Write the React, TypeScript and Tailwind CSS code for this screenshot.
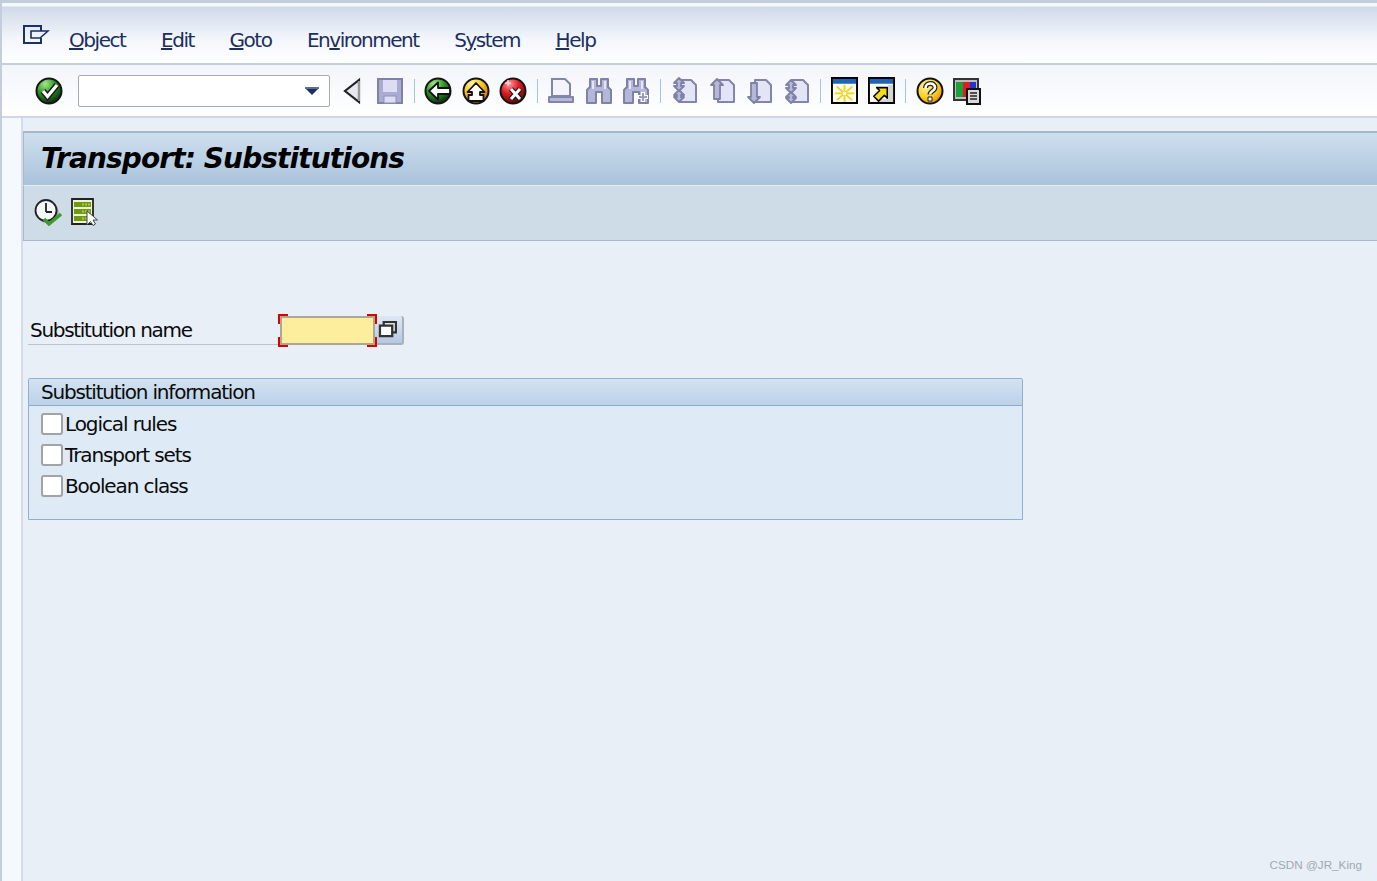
import type { ReactNode } from 'react'

const FONT = 'font-["DejaVu_Sans",sans-serif]'

function Ball({ id, light, base, dark, children }: { id: string; light: string; base: string; dark: string; children: ReactNode }) {
  return (
    <svg viewBox="0 0 28 28" className="w-[28px] h-[28px]">
      <defs>
        <radialGradient id={id} cx="0.35" cy="0.22" r="0.85">
          <stop offset="0" stopColor={light} />
          <stop offset="0.45" stopColor={base} />
          <stop offset="1" stopColor={dark} />
        </radialGradient>
      </defs>
      <circle cx="14" cy="14" r="12.5" fill={`url(#${id})`} stroke="#151515" strokeWidth="2" />
      {children}
    </svg>
  )
}

const CheckIcon = () => (
  <Ball id="ok" light="#a5e88a" base="#2f9a2a" dark="#06200a">
    <path d="M8 14l4.500 5.500L22 8" fill="none" stroke="#1a1a1a" strokeWidth="6" />
    <path d="M8 14l4.500 5.500L22 8" fill="none" stroke="#fff" strokeWidth="3.200" />
  </Ball>
)

const BackIcon = () => (
  <Ball id="bk" light="#a5e88a" base="#2f9a2a" dark="#06200a">
    <path d="M5 14l9-8.500v5.500h12v6H14v5.500z" fill="#fff" stroke="#111" strokeWidth="1.800" strokeLinejoin="round" />
  </Ball>
)

const UpIcon = () => (
  <Ball id="up" light="#fff3a8" base="#f7c81e" dark="#c9600f">
    <path d="M14 6l8.500 9H18v3h3.500v6h-15v-6H10v-3H5.500z" fill="#fff" stroke="#111" strokeWidth="1.800" strokeLinejoin="round" />
  </Ball>
)

const CancelIcon = () => (
  <Ball id="cn" light="#ff9a9a" base="#e01b24" dark="#4d060a">
    <path d="M12 12l9 10m0-10l-9 10" stroke="#1a1a1a" strokeWidth="5.500" />
    <path d="M12 12l9 10m0-10l-9 10" stroke="#fff" strokeWidth="3" />
    <path d="M9 3v6M6 6h6" stroke="#ffd6d6" strokeWidth="1.500" />
  </Ball>
)

const Triangle = () => (
  <svg viewBox="0 0 28 28" className="w-[28px] h-[28px]">
    <path d="M20 3v22L6 14z" fill="#e6e9ef" stroke="#222" strokeWidth="2.200" strokeLinejoin="miter" />
    <path d="M20 4v20" stroke="#999" strokeWidth="2" />
  </svg>
)

const Save = () => (
  <svg viewBox="0 0 28 28" className="w-[28px] h-[28px]">
    <path d="M2 2h24v24H2z" fill="#a9abd2" stroke="#7f81a6" strokeWidth="2" />
    <path d="M7 3h14v12H7z" fill="#dcdcf2" />
    <path d="M8 19h12v7H8z" fill="#dcdcf2" stroke="#8f91b5" />
  </svg>
)

const Print = () => (
  <svg viewBox="0 0 28 28" className="w-[28px] h-[28px]">
    <path d="M5 2h13l5 5v12H5z" fill="#f2f3fb" stroke="#8285aa" strokeWidth="2" />
    <path d="M2 20h24v5H2z" fill="#b5b7d9" stroke="#8285aa" strokeWidth="2" strokeLinejoin="round" />
  </svg>
)

const Find = ({ plus }: { plus?: boolean }) => (
  <svg viewBox="0 0 28 28" className="w-[28px] h-[28px]">
    <path d="M5 2h7v7h4V2h7v8l3 3v13h-9V15h-6v11H2V13l3-3z" fill="#b5b7d9" stroke="#7f81a6" strokeWidth="2" strokeLinejoin="round" />
    <path d="M7 4h2v8H7zM19 4h2v8h-2z" fill="#e4e5f5" />
    {plus && <path d="M21 15v10M16 20h10" stroke="#fff" strokeWidth="4" />}
    {plus && <path d="M21 16v8M17 20h8" stroke="#9a9cc2" strokeWidth="2" />}
  </svg>
)

const Page = ({ arrows }: { arrows: string }) => (
  <svg viewBox="0 0 28 28" className="w-[28px] h-[28px]">
    <path d="M9 3h11l5 5v17H9z" fill="#e3e4f6" stroke="#8285aa" strokeWidth="2" strokeLinejoin="round" />
    <path d={arrows} fill="#b5b7d9" stroke="#7f81a6" strokeWidth="1.800" strokeLinejoin="round" />
  </svg>
)

const NewSession = () => (
  <svg viewBox="0 0 28 28" className="w-[27px] h-[27px]">
    <path d="M1 1h26v26H1z" fill="#fbfbf0" stroke="#000" strokeWidth="2" />
    <path d="M2 2h24v5H2z" fill="#1f63b5" />
    <path d="M14 8v18M4 17h20M6 10l16 14M22 10L6 24" stroke="#efd51a" strokeWidth="2" />
    <circle cx="14" cy="17" r="2" fill="#fbfbf0" />
  </svg>
)

const Shortcut = () => (
  <svg viewBox="0 0 28 28" className="w-[27px] h-[27px]">
    <path d="M1 1h26v26H1z" fill="#fbfbf0" stroke="#000" strokeWidth="2" />
    <path d="M2 2h24v5H2z" fill="#1f63b5" />
    <path d="M21 8h5v18H10v-3h11z" fill="#d4d4d4" />
    <path d="M8 22l-2-2 6-6-3-3h11v11l-3-3-6 6z" fill="#f2dc1c" stroke="#000" strokeWidth="1.600" strokeLinejoin="round" />
  </svg>
)

const Help = () => (
  <svg viewBox="0 0 28 28" className="w-[28px] h-[28px]">
    <defs>
      <radialGradient id="hp" cx="0.35" cy="0.3" r="0.85">
        <stop offset="0" stopColor="#fff2a0" />
        <stop offset="0.55" stopColor="#f9cf1e" />
        <stop offset="1" stopColor="#df7410" />
      </radialGradient>
    </defs>
    <circle cx="14" cy="14" r="12.500" fill="url(#hp)" stroke="#111" strokeWidth="2" />
    <path d="M9.500 11c0-6 9.500-6 9.500-.5 0 3.500-5 3.500-5 7" fill="none" stroke="#222" strokeWidth="5" />
    <path d="M9.500 11c0-6 9.500-6 9.500-.5 0 3.500-5 3.500-5 7" fill="none" stroke="#fff" strokeWidth="2.600" />
    <path d="M12 20h4v4h-4z" fill="#fff" stroke="#222" />
  </svg>
)

const LayoutIcon = () => (
  <svg viewBox="0 0 28 28" className="w-[28px] h-[28px]">
    <path d="M1 2h24v21H1z" fill="#bdbdbd" stroke="#333" strokeWidth="2" />
    <path d="M3 5h7v15H3z" fill="#19a23a" />
    <path d="M10 5h7v15h-7z" fill="#e01b24" />
    <path d="M17 5h6v15h-6z" fill="#2034d6" />
    <path d="M14 12h13v15H14z" fill="#d9d9d9" stroke="#111" strokeWidth="2" />
    <path d="M17 16h7M17 19h7M17 22h7" stroke="#222" strokeWidth="1.500" />
  </svg>
)

const ClockCheck = () => (
  <svg viewBox="0 0 28 28" className="w-[28px] h-[28px]">
    <circle cx="13.500" cy="14" r="11" fill="#9aa0a8" />
    <circle cx="12" cy="12.500" r="10.500" fill="#f4f6f8" stroke="#222" strokeWidth="1.800" />
    <path d="M12 5v9M12 14h6" stroke="#222" strokeWidth="1.800" />
    <path d="M10 21l5 5L27 16" fill="none" stroke="#3d9a2e" strokeWidth="3.400" />
  </svg>
)

const ListCursor = () => (
  <svg viewBox="0 0 28 28" className="w-[28px] h-[28px]">
    <path d="M2 1h21v25H2z" fill="#eef2dd" stroke="#222" strokeWidth="1.800" />
    <path d="M4 4h17v5H4zM4 11h17v5H4zM4 18h17v5H4z" fill="#6f9a10" />
    <path d="M12 6.500h8M12 13.500h8M12 20.500h8" stroke="#a5c94a" strokeWidth="2" strokeDasharray="2 1" />
    <path d="M17 13v14l3.500-3.500 2.500 4 2.500-1.500-2.500-4h4.500z" fill="#fff" stroke="#444" strokeWidth="1" />
  </svg>
)

const Sep = ({ cls }: { cls: string }) => <div className={`w-px h-[24px] bg-[#a9c4dc] ${cls}`} />

const Tool = ({ children }: { children: ReactNode }) => (
  <div className="w-[37.200px] flex-none flex justify-center">{children}</div>
)

// text before the access key, the key, text after
const MENU: [string, string, string][] = [
  ['', 'O', 'bject'],
  ['', 'E', 'dit'],
  ['', 'G', 'oto'],
  ['En', 'v', 'ironment'],
  ['S', 'y', 'stem'],
  ['', 'H', 'elp'],
]

function Field({ label }: { label: string }) {
  return (
    <label className="flex items-center h-[31px]">
      <span className="w-[22px] h-[22px] rounded-[3px] bg-white border-2 border-[#a3a3a3]" />
      <span className="ml-[2px] text-[20px] tracking-[-1.100px] text-[#0a0a0a]">{label}</span>
    </label>
  )
}

const Corner = ({ cls }: { cls: string }) => <span className={`absolute w-[10px] h-[10px] border-[#d90000] ${cls}`} />

export default function App() {
  return (
    <div className={`relative h-[881px] overflow-hidden bg-[#e8eff7] ${FONT} border-l-2 border-[#c3cedc] tracking-[-1.300px]`}>
      <div className="h-[65px] border-t-[3px] border-b-2 border-t-[#c3cedc] border-b-[#c5ced9] bg-[linear-gradient(to_bottom,#f5f8fc_0,#f5f8fc_3px,#d0dae8_4px,#f3f6fb_36px,#fff_60px)] flex items-end">
        <svg viewBox="0 0 28 20" className="w-[28px] h-[20px] ml-[20px] mb-[18px]">
          <path d="M19 6V1H2V18H19V13" fill="none" stroke="#1c2f66" strokeWidth="2" />
          <path d="M9 6H26L18 13H9z" fill="none" stroke="#1c2f66" strokeWidth="1.600" />
        </svg>
        <nav className="ml-[19px] mb-[11px] flex gap-[35.500px] text-[20px] leading-[24px] tracking-[-1.450px] text-[#1c2f5f]">
          {MENU.map(([pre, key, rest]) => (
            <span key={key}>
              {pre}
              <span className="underline">{key}</span>
              {rest}
            </span>
          ))}
        </nav>
      </div>

      <div className="h-[53px] border-b-2 border-[#cfd7e2] bg-gradient-to-b from-[#f2f5fa] to-white flex items-center pl-[28.500px]">
        <Tool><CheckIcon /></Tool>
        <div className="ml-[10px] w-[252px] h-[32px] rounded-[2px] bg-white border border-[#a8acb2] flex items-center justify-end pr-[10px]">
          <div className="flex flex-col items-center">
            <div className="w-[14px] h-[2px] bg-[#5a6f96]" />
            <div className="w-0 h-0 border-x-[6px] border-x-transparent border-t-[6px] border-t-[#1c2f66]" />
          </div>
        </div>
        <div className="ml-[5px] flex items-center">
          <Tool><Triangle /></Tool>
          <Tool><Save /></Tool>
          <Sep cls="mx-[4.900px]" />
          <Tool><BackIcon /></Tool>
          <Tool><UpIcon /></Tool>
          <Tool><CancelIcon /></Tool>
          <Sep cls="mx-[5.200px]" />
          <Tool><Print /></Tool>
          <Tool><Find /></Tool>
          <Tool><Find plus /></Tool>
          <Sep cls="mx-[5.700px]" />
          <Tool><Page arrows="M8 1l5 5h-3v3h3l-5 5-5-5h3V6H3zM8 13l5 5h-3v2h3l-5 5-5-5h3v-2H3z" /></Tool>
          <Tool><Page arrows="M8 2l6 6h-3v14H5V8H2z" /></Tool>
          <Tool><Page arrows="M8 26l6-6h-3V6H5v14H2z" /></Tool>
          <Tool><Page arrows="M8 3l5 5h-3v3h3l-5 5-5-5h3V8H3zM8 15l5 5h-3v1h3l-5 5-5-5h3v-1H3z" /></Tool>
          <Sep cls="mx-[4.600px]" />
          <Tool><NewSession /></Tool>
          <Tool><Shortcut /></Tool>
          <Sep cls="mx-[5.300px]" />
          <Tool><Help /></Tool>
          <Tool><LayoutIcon /></Tool>
        </div>
      </div>

      <div className="flex h-[763px]">
        <div className="w-[19px] flex-none bg-[#f5f8fc] border-r-2 border-[#d3dce8] box-content" />
        <div className="flex-1 min-w-0 pt-[13px]">
          <div className="h-[54px] border-t-2 border-l border-[#a9b8c8] bg-gradient-to-b from-[#cfdfee] to-[#a9c3db] flex items-center pl-[17px]">
            <h1 className="text-[28px] font-bold italic text-black tracking-[-0.900px] leading-none">Transport: Substitutions</h1>
          </div>
          <div className="h-[56px] border-t border-b border-l border-t-[#e4ecf4] border-b-[#a9b8c8] border-l-[#a9b8c8] bg-[#cedce8] flex items-center pl-[10px] pb-[3px] gap-[8px]">
            <ClockCheck />
            <ListCursor />
          </div>

          <div className="pl-[5px] pt-[75px]">
            <div className="flex items-center">
              <div className="w-[252px] h-[29px] border-b border-[#bcc3cb] pl-[2px] text-[20px] leading-[28px] text-[#0a0a0a]">Substitution name</div>
              <div className="relative w-[95px] h-[29px] bg-[#fdee9e] border-2 border-[#a9a995]">
                <Corner cls="-left-[4px] -top-[4px] border-l-2 border-t-2" />
                <Corner cls="-left-[4px] -bottom-[4px] border-l-2 border-b-2" />
                <Corner cls="-right-[4px] -top-[4px] border-r-2 border-t-2" />
                <Corner cls="-right-[4px] -bottom-[4px] border-r-2 border-b-2" />
              </div>
              <div className="w-[29px] h-[29px] rounded-r-[3px] bg-gradient-to-b from-[#dfe8f3] to-[#b4c8e2] border-r-2 border-b-2 border-[#a9b0ba] flex items-center pl-[3px]">
                <svg viewBox="0 0 20 18" className="w-[19px] h-[17px]">
                  <path d="M6 1h13v11H6z" fill="#dfe3e8" stroke="#333" strokeWidth="2.400" />
                  <path d="M2 5h13v11H2z" fill="#fff" stroke="#333" strokeWidth="2.400" />
                </svg>
              </div>
            </div>

            <div className="mt-[33px] w-[995px] h-[142px] rounded-t-[2px] border border-[#8fb0d2] bg-[#deeaf5]">
              <div className="h-[27px] border-b border-[#8fa9c8] bg-gradient-to-b from-[#d3e2f1] to-[#bcd2e8] pl-[12px] text-[20px] leading-[26px] tracking-[-1.200px] text-[#0a0a0a]">Substitution information</div>
              <div className="pl-[12px] pt-[2px] flex flex-col">
                <Field label="Logical rules" />
                <Field label="Transport sets" />
                <Field label="Boolean class" />
              </div>
            </div>
          </div>
        </div>
      </div>

      <div className="absolute right-[15px] bottom-[7px] text-[11.700px] tracking-normal font-['Liberation_Sans',sans-serif] text-[#a3a8ae]">CSDN @JR_King</div>
    </div>
  )
}
